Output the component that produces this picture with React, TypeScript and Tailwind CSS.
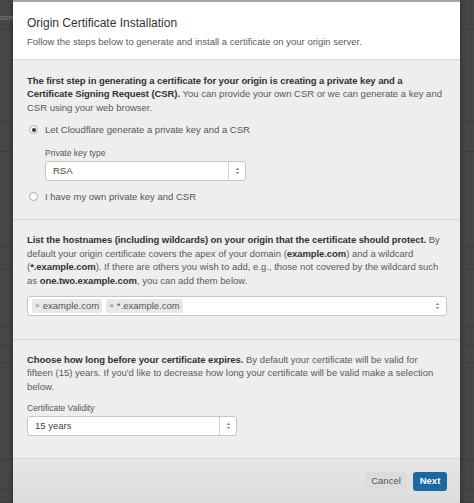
import React from "react";

function UpDown() {
  return (
    <svg width="5" height="8" viewBox="0 0 5 8" fill="#8a8a8a">
      <path d="M2.5 0.8 L4.3 3 L0.7 3 Z" />
      <path d="M2.5 7.2 L4.3 5 L0.7 5 Z" />
    </svg>
  );
}

function Select({ value, width }: { value: string; width: string }) {
  return (
    <div className={`flex h-[20px] ${width} items-stretch rounded-[3px] border border-[#c6c6c6] bg-white`}>
      <div className="flex flex-1 items-center pl-[7px] text-[9.5px] text-[#444]">{value}</div>
      <div className="flex w-[17px] items-center justify-center border-l border-[#d4d4d4]">
        <UpDown />
      </div>
    </div>
  );
}

function Radio({ checked, label }: { checked?: boolean; label: string }) {
  return (
    <div className="flex h-[13px] items-center">
      <div className="ml-[2px] flex h-[9px] w-[9px] items-center justify-center rounded-full border border-[#a9a9a9] bg-white">
        {checked && <div className="h-[4px] w-[4px] rounded-full bg-[#333]" />}
      </div>
      <span className="ml-[7px] text-[9.5px] text-[#555]">{label}</span>
    </div>
  );
}

function Tag({ label }: { label: string }) {
  return (
    <div className="flex h-[14px] items-center rounded-[2px] bg-[#e8e8e8] px-[3px] text-[9.5px] text-[#555]">
      <span className="mr-[3px] text-[8px] text-[#777]">×</span>
      {label}
    </div>
  );
}

function B({ children }: { children: React.ReactNode }) {
  return <b className="tracking-[-0.08px] text-[#333]">{children}</b>;
}

export default function App() {
  const rowHeights = [30, 92, 30, 95, 23, 57, 19, 17, 97, 30, 13];
  return (
    <div
      className="relative h-[503px] w-[474px] overflow-hidden bg-[#464646]"
      style={{ fontFamily: '"Liberation Sans", Arial, sans-serif' }}
    >
      {/* background page behind overlay */}
      <div className="flex flex-col">
        {rowHeights.map((h, i) => (
          <div
            key={i}
            className="border-b border-[#3d3d3d] text-[8px] text-[#8a8a8a]"
            style={{ height: h }}
          >
            {i === 0 && <div className="pt-[12px]">com</div>}
          </div>
        ))}
      </div>

      {/* modal */}
      <div className="absolute left-[13px] top-0 w-[447px] border-t-2 border-[#a4a4a4] bg-[#eeeeee] shadow-[0_0_6px_rgba(0,0,0,0.4)]">
        {/* header */}
        <div className="h-[58px] border-b border-[#d9d9d9] bg-white px-[14px] pt-[13px]">
          <div className="text-[12px] leading-[16px] text-[#333]">Origin Certificate Installation</div>
          <div className="mt-[4px] text-[9.5px] leading-[13px] text-[#5a5a5a]">
            Follow the steps below to generate and install a certificate on your origin server.
          </div>
        </div>

        {/* section 1 */}
        <div className="h-[160px] border-b border-[#d6d6d6] px-[14px] pt-[14px]">
          <p className="whitespace-nowrap text-[9.5px] leading-[13.4px] text-[#5a5a5a]">
            <B>
              The first step in generating a certificate for your origin is creating a private key and a
              <br />
              Certificate Signing Request (CSR).
            </B>{" "}
            You can provide your own CSR or we can generate a key and
            <br />
            CSR using your web browser.
          </p>
          <div className="mt-[9px]">
            <Radio checked label="Let Cloudflare generate a private key and a CSR" />
          </div>
          <div className="mt-[11px] pl-[18px]">
            <div className="text-[8.5px] leading-[12px] text-[#555]">Private key type</div>
            <div className="mt-[2px]">
              <Select value="RSA" width="w-[201px]" />
            </div>
          </div>
          <div className="mt-[9px]">
            <Radio label="I have my own private key and CSR" />
          </div>
        </div>

        {/* section 2 */}
        <div className="h-[120px] border-b border-[#d6d6d6] px-[14px] pt-[13px]">
          <p className="whitespace-nowrap text-[9.5px] leading-[13.5px] text-[#5a5a5a]">
            <B>List the hostnames (including wildcards) on your origin that the certificate should protect.</B> By
            <br />
            default your origin certificate covers the apex of your domain (<B>example.com</B>) and a wildcard
            <br />(<B>*.example.com</B>). If there are others you wish to add, e.g., those not covered by the
            wildcard such
            <br />
            as <B>one.two.example.com</B>, you can add them below.
          </p>
          <div className="mt-[9px] flex h-[20px] w-[420px] items-center rounded-[3px] border border-[#c6c6c6] bg-white pl-[4px] pr-[6px]">
            <div className="flex flex-1 items-center gap-[4px]">
              <Tag label="example.com" />
              <Tag label="*.example.com" />
            </div>
            <UpDown />
          </div>
        </div>

        {/* section 3 */}
        <div className="h-[119px] border-b border-[#d6d6d6] px-[14px] pt-[13px]">
          <p className="whitespace-nowrap text-[9.5px] leading-[13.4px] text-[#5a5a5a]">
            <B>Choose how long before your certificate expires.</B> By default your certificate will be valid for
            <br />
            fifteen (15) years. If you'd like to decrease how long your certificate will be valid make a selection
            <br />
            below.
          </p>
          <div className="mt-[9px] text-[8.5px] leading-[12px] text-[#555]">Certificate Validity</div>
          <div className="mt-[2px]">
            <Select value="15 years" width="w-[210px]" />
          </div>
        </div>

        {/* footer */}
        <div className="flex h-[60px] justify-end gap-[6px] bg-gradient-to-b from-[#e6e6e6] to-[#d9d9d9] pr-[13px] pt-[13px]">
          <button className="h-[19px] w-[42px] rounded-[3px] bg-[#dcdcdc] text-[9.5px] text-[#555]">Cancel</button>
          <button className="h-[19px] w-[34px] rounded-[3px] bg-[#1b69a4] text-[9.5px] font-bold text-white">
            Next
          </button>
        </div>
      </div>
    </div>
  );
}
